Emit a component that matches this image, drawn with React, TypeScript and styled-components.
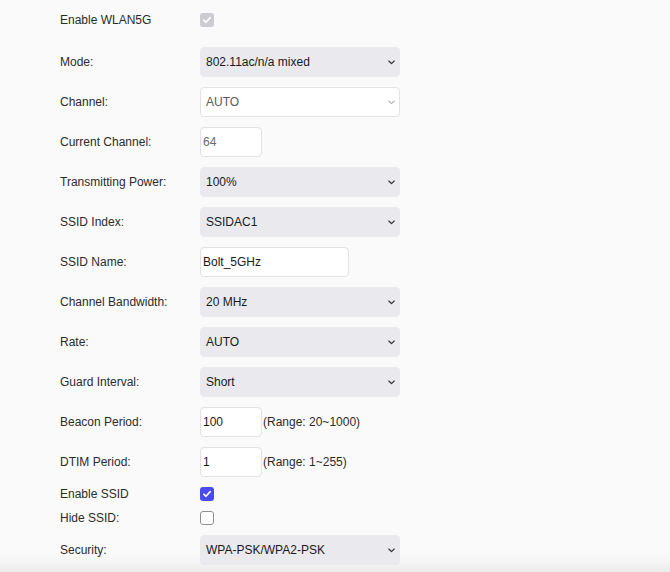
import React from "react"
import styled, { createGlobalStyle } from "styled-components"

const GlobalStyle = createGlobalStyle`
  html, body {
    margin: 0;
    padding: 0;
    height: 100%;
  }
  body {
    background: linear-gradient(to bottom, #fafafa calc(100% - 18px), #ececec 100%);
    font-family: "Liberation Sans", Arial, sans-serif;
    font-size: 12px;
    color: #2b2b2b;
  }
`

type Field =
  | { kind: "check"; label: string; checked: boolean; disabled?: boolean; compact?: boolean }
  | { kind: "select"; label: string; value: string; disabled?: boolean }
  | { kind: "text"; label: string; value: string; width: number; disabled?: boolean; hint?: string }

const fields: Field[] = [
  { kind: "check", label: "Enable WLAN5G", checked: true, disabled: true },
  { kind: "select", label: "Mode:", value: "802.11ac/n/a mixed" },
  { kind: "select", label: "Channel:", value: "AUTO", disabled: true },
  { kind: "text", label: "Current Channel:", value: "64", width: 62, disabled: true },
  { kind: "select", label: "Transmitting Power:", value: "100%" },
  { kind: "select", label: "SSID Index:", value: "SSIDAC1" },
  { kind: "text", label: "SSID Name:", value: "Bolt_5GHz", width: 149 },
  { kind: "select", label: "Channel Bandwidth:", value: "20 MHz" },
  { kind: "select", label: "Rate:", value: "AUTO" },
  { kind: "select", label: "Guard Interval:", value: "Short" },
  { kind: "text", label: "Beacon Period:", value: "100", width: 62, hint: "(Range: 20~1000)" },
  { kind: "text", label: "DTIM Period:", value: "1", width: 62, hint: "(Range: 1~255)" },
  { kind: "check", label: "Enable SSID", checked: true, compact: true },
  { kind: "check", label: "Hide SSID:", checked: false, compact: true },
  { kind: "select", label: "Security:", value: "WPA-PSK/WPA2-PSK" },
]

const Chevron: React.FC<{ muted?: boolean }> = ({ muted }) => (
  <S.Chevron width="7" height="5" viewBox="0 0 7 5" fill="none">
    <path
      d="M0.8 1 L3.5 3.7 L6.2 1"
      stroke={muted ? "#b4b4b8" : "#2a2a2a"}
      strokeWidth="1.1"
      strokeLinecap="round"
      strokeLinejoin="round"
    />
  </S.Chevron>
)

const CheckBox: React.FC<{ checked: boolean; disabled?: boolean }> = ({ checked, disabled }) => (
  <S.Box $checked={checked} $disabled={disabled}>
    {checked && (
      <svg width="10" height="10" viewBox="0 0 10 10" fill="none">
        <path
          d="M1.8 5.2 L4 7.3 L8.2 2.6"
          stroke="#fff"
          strokeWidth="1.6"
          strokeLinecap="round"
          strokeLinejoin="round"
        />
      </svg>
    )}
  </S.Box>
)

const Control: React.FC<{ field: Field }> = ({ field }) => {
  if (field.kind === "check") return <CheckBox checked={field.checked} disabled={field.disabled} />
  if (field.kind === "select") {
    return (
      <S.Select $disabled={field.disabled}>
        <span>{field.value}</span>
        <Chevron muted={field.disabled} />
      </S.Select>
    )
  }
  return (
    <S.Inline>
      <S.TextBox $width={field.width} $disabled={field.disabled}>
        {field.value}
      </S.TextBox>
      {field.hint && <S.Hint>{field.hint}</S.Hint>}
    </S.Inline>
  )
}

export default function App() {
  return (
    <>
      <GlobalStyle />
      <S.Form>
        {fields.map((f, i) => (
          <S.Row key={i} $first={i === 0} $compact={f.kind === "check" && f.compact}>
            <S.Label>{f.label}</S.Label>
            <Control field={f} />
          </S.Row>
        ))}
      </S.Form>
    </>
  )
}

const S = {
  Form: styled.div`
    display: flex;
    flex-direction: column;
    padding: 0 0 0 60px;
  `,
  Row: styled.div<{ $first?: boolean; $compact?: boolean }>`
    display: grid;
    grid-template-columns: 140px auto;
    align-items: center;
    height: ${(p) => (p.$compact ? "24px" : "40px")};
    margin-bottom: ${(p) => (p.$first ? "2px" : "0")};
  `,
  Label: styled.div`
    color: #2b2b2b;
    white-space: nowrap;
  `,
  Select: styled.div<{ $disabled?: boolean }>`
    position: relative;
    box-sizing: border-box;
    width: 200px;
    height: 30px;
    display: flex;
    align-items: center;
    padding: 0 5px;
    border-radius: 4px;
    background: ${(p) => (p.$disabled ? "#ffffff" : "#e9e9ee")};
    border: 1px solid ${(p) => (p.$disabled ? "#e3e3e6" : "#e9e9ee")};
    color: ${(p) => (p.$disabled ? "#5a5a5a" : "#1a1a1a")};
  `,
  Chevron: styled.svg`
    position: absolute;
    right: 4px;
    top: 12px;
  `,
  Inline: styled.div`
    display: flex;
    align-items: center;
  `,
  TextBox: styled.div<{ $width: number; $disabled?: boolean }>`
    box-sizing: border-box;
    width: ${(p) => p.$width}px;
    height: 30px;
    display: flex;
    align-items: center;
    padding: 0 2px;
    background: #ffffff;
    border: 1px solid #e2e2e5;
    border-radius: 4px;
    color: ${(p) => (p.$disabled ? "#6a6a6a" : "#1a1a1a")};
  `,
  Hint: styled.span`
    color: #2b2b2b;
    margin-left: 1px;
  `,
  Box: styled.div<{ $checked: boolean; $disabled?: boolean }>`
    box-sizing: border-box;
    width: 14px;
    height: 14px;
    border-radius: 3px;
    display: flex;
    align-items: center;
    justify-content: center;
    background: ${(p) => (p.$disabled ? "#cbcbd0" : p.$checked ? "#4a4af2" : "#ffffff")};
    border: ${(p) => (p.$checked ? "none" : "1.5px solid #8e8e94")};
  `,
}
